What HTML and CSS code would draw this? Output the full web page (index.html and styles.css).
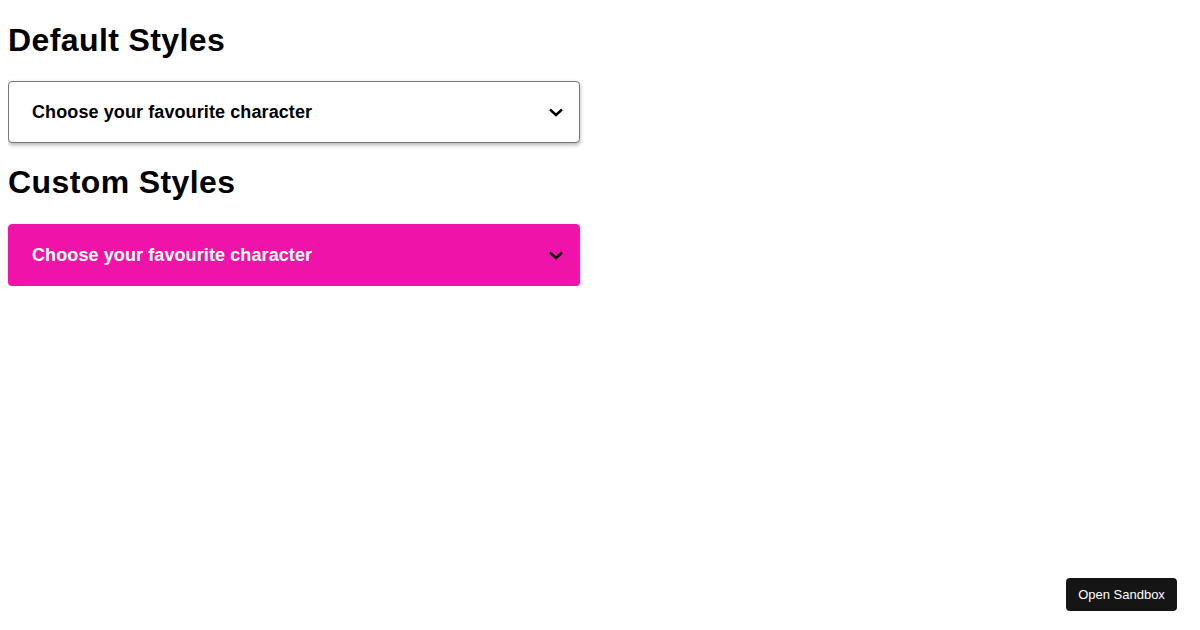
FILE: index.html
```html
<!DOCTYPE html>
<html lang="en">
<head>
    <meta charset="UTF-8">
    <meta name="viewport" content="width=device-width, initial-scale=1.0">
    <title>Select Styles</title>
    <link rel="stylesheet" href="styles.css">
</head>
<body>
    <h1 class="first">Default Styles</h1>
    <div class="select">
        <span class="select-label">Choose your favourite character</span>
        <svg class="chevron" width="16" height="16" viewBox="0 0 16 16"><path d="M2 5.5 L8 11 L14 5.5" fill="none" stroke="#000" stroke-width="2.4"/></svg>
    </div>

    <h1>Custom Styles</h1>
    <div class="select select-custom">
        <span class="select-label">Choose your favourite character</span>
        <svg class="chevron" width="16" height="16" viewBox="0 0 16 16"><path d="M2 5.5 L8 11 L14 5.5" fill="none" stroke="#000" stroke-width="2.4"/></svg>
    </div>

    <a class="sandbox-btn" href="#">Open Sandbox</a>
</body>
</html>
```

FILE: styles.css
```css
body {
    font-family: "Liberation Sans", Arial, sans-serif;
    margin: 0 8px;
    background: #ffffff;
    color: #000;
}
h1 {
    font-size: 32px;
    font-weight: bold;
    letter-spacing: 0.4px;
    margin: 21.5px 0 22.5px;
}
h1.first { margin: 22px 0 21.5px; }
.select {
    width: 572px;
    height: 62px;
    box-sizing: border-box;
    padding: 0 15px 0 23px;
    display: flex;
    align-items: center;
    justify-content: space-between;
    background: #fff;
    border: 1px solid #767676;
    border-radius: 4px;
    box-shadow: 0 2px 4px rgba(0, 0, 0, 0.3);
}
.select-label {
    font-size: 18px;
    font-weight: bold;
    letter-spacing: 0.1px;
    padding-top: 2px;
}
.select-custom {
    background: #ef13aa;
    border-color: #ef13aa;
    color: #fff;
}
.chevron { display: block; }
.sandbox-btn {
    position: fixed;
    right: 23px;
    bottom: 19px;
    width: 111px;
    height: 33px;
    display: flex;
    align-items: center;
    justify-content: center;
    background: #151515;
    color: #fff;
    font-size: 13px;
    text-decoration: none;
    border-radius: 4px;
}
```
